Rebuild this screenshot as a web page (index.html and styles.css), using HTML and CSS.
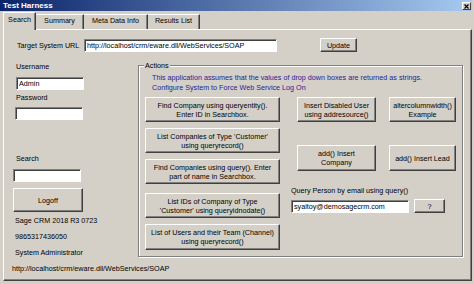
FILE: index.html
```html
<!DOCTYPE html>
<html lang="en">
<head>
  <meta charset="UTF-8">
  <title>Test Harness</title>
  <link rel="stylesheet" href="styles.css">
</head>
<body>

  <div class="window">
    <div class="titlebar">
      <span class="title">Test Harness</span>
      <span class="close">
        <svg width="5" height="5" viewBox="0 0 5 5"><path d="M0.5 0.5 L4.5 4.5 M4.5 0.5 L0.5 4.5" stroke="#000" stroke-width="1.2"/></svg>
      </span>
    </div>

    <div class="tabs">
      <div class="tab active">Search</div>
      <div class="tab tab-summary">Summary</div>
      <div class="tab tab-meta">Meta Data Info</div>
      <div class="tab tab-results">Results List</div>
    </div>

    <div class="page">
      <div class="url-row">
        <span class="url-label">Target System URL</span>
        <input class="field url-field" type="text" value="http://localhost/crm/eware.dll/WebServices/SOAP">
        <button class="btn update">Update</button>
      </div>

      <div class="body">
        <div class="login">
          <span class="lbl lbl-user">Username</span>
          <input class="field f-user" type="text" value="Admin">
          <span class="lbl lbl-pass">Password</span>
          <input class="field f-pass" type="password">
          <span class="lbl lbl-search">Search</span>
          <input class="field f-search" type="text">
          <button class="btn logoff">Logoff</button>
          <span class="info info-first">Sage CRM 2018 R3 0723</span>
          <span class="info">9865317436050</span>
          <span class="info">System Administrator</span>
        </div>

        <div class="group">
          <span class="group-title">Actions</span>
          <p class="note">This application assumes that the values of drop down boxes are returned as strings.</p>
          <p class="note">Configure System to Force Web Service Log On</p>

          <div class="action-cols">
            <div class="col-left">
              <button class="btn wide">Find Company using queryentity().<br>Enter ID in Searchbox.</button>
              <button class="btn wide">List Companies of Type 'Customer'<br>using queryrecord()</button>
              <button class="btn wide">Find Companies using query(). Enter<br>part of name in Searchbox.</button>
              <button class="btn wide spaced">List IDs of Company of Type<br>'Customer' using queryidnodate()</button>
              <button class="btn wide tall">List of Users and their Team (Channel)<br>using queryrecord()</button>
            </div>

            <div class="col-right">
              <div class="btn-row">
                <button class="btn mid">Insert Disabled User<br>using addresource()</button>
                <button class="btn narrow">altercolumnwidth()<br>Example</button>
              </div>
              <div class="btn-row second">
                <button class="btn mid tall">add() Insert<br>Company</button>
                <button class="btn narrow tall">add() Insert Lead</button>
              </div>
              <span class="lbl query-label">Query Person by email using query()</span>
              <div class="query-row">
                <input class="field f-email" type="text" value="syaltoy@demosagecrm.com">
                <button class="btn ask">?</button>
              </div>
            </div>
          </div>
        </div>
      </div>

      <div class="foot">http://localhost/crm/eware.dll/WebServices/SOAP</div>
    </div>
  </div>

</body>
</html>
```

FILE: styles.css
```css
* {
  box-sizing: border-box;
}
body {
  margin: 0;
  background-color: #d4d0c8;
  font-family: "Liberation Sans", Arial, sans-serif;
  font-size: 7.2px;
  color: #000;
}
.window {
  width: 474px;
  height: 284px;
  overflow: hidden;
}

/* title bar */
.titlebar {
  height: 11px;
  margin-right: 2px;
  padding: 0 1px 0 3px;
  display: flex;
  justify-content: space-between;
  background: linear-gradient(to right, #0a246a, #a6caf0);
}
.title {
  color: white;
  font-weight: bold;
  font-size: 8px;
  line-height: 11px;
}
.close {
  align-self: flex-end;
  margin-bottom: 1px;
  width: 9px;
  height: 8px;
  display: flex;
  align-items: center;
  justify-content: center;
  background-color: #d4d0c8;
  border: 1px solid;
  border-color: #fff #404040 #404040 #fff;
}

/* tabs */
.tabs {
  height: 18px;
  padding-left: 3px;
  display: flex;
  align-items: flex-end;
  position: relative;
  z-index: 1;
}
.tab {
  height: 15px;
  line-height: 12px;
  text-align: center;
  border-top: 1px solid #fff;
  border-left: 1px solid #fff;
  border-right: 1px solid #404040;
  box-shadow: inset -1px 0 #808080;
}
.tab.active {
  width: 33px;
  height: 18px;
  line-height: 14px;
  margin-bottom: -1px;
  background-color: #d4d0c8;
}
.tab-summary { width: 48px; border-left: none; }
.tab-meta { width: 64px; border-left: none; }
.tab-results { width: 52px; border-left: none; }

/* tab page */
.page {
  height: 252px;
  margin: 0 2px 0 3px;
  border: 1px solid;
  border-color: #fff #404040 #404040 #fff;
  box-shadow: inset -1px -1px #808080;
}
.url-row {
  height: 22px;
  padding: 8px 0 0 13px;
  display: flex;
  align-items: center;
}
.url-label {
  width: 67px;
}
.url-field {
  width: 193px;
}
.update {
  width: 37px;
  height: 14px;
  margin-left: 43px;
}

/* controls */
.field {
  height: 13px;
  padding: 0 2px;
  font: inherit;
  color: #000;
  background-color: white;
  border: 1px solid;
  border-color: #808080 #fff #fff #808080;
  box-shadow: inset 1px 1px #404040;
  outline: none;
}
.btn {
  padding: 0;
  font: inherit;
  line-height: 9px;
  color: #000;
  white-space: nowrap;
  background-color: #d4d0c8;
  border: 1px solid;
  border-color: #fff #404040 #404040 #fff;
  box-shadow: inset -1px -1px #808080;
}

/* left column */
.body {
  display: flex;
}
.login {
  width: 134px;
  padding-left: 9px;
  display: flex;
  flex-direction: column;
  align-items: flex-start;
}
.lbl, .info {
  line-height: 9px;
}
.lbl-user { margin: 10px 0 0 3px; }
.f-user { width: 68px; margin: 6px 0 0 3px; }
.lbl-pass { margin: 3px 0 0 3px; }
.f-pass { width: 68px; margin: 5px 0 0 2px; }
.lbl-search { margin: 34px 0 0 3px; }
.f-search { width: 68px; margin-top: 6px; }
.logoff {
  width: 70px;
  height: 24px;
  margin-top: 6px;
}
.info {
  margin: 7px 0 0 2px;
}
.info.info-first {
  margin-top: 4px;
}

/* actions group */
.group {
  position: relative;
  width: 325px;
  height: 192px;
  margin-top: 13px;
  padding: 7px 0 0 6px;
  border: 1px solid #808080;
  box-shadow: inset 1px 1px #fff, 1px 1px #fff;
}
.group-title {
  position: absolute;
  top: -5px;
  left: 5px;
  padding: 0 1px;
  line-height: 9px;
  background-color: #d4d0c8;
}
.note {
  margin: 0 0 0 7px;
  line-height: 10px;
  color: #1e1e96;
}
.action-cols {
  margin-top: 4px;
  display: flex;
  align-items: flex-start;
}
.col-left {
  width: 135px;
  display: flex;
  flex-direction: column;
  gap: 6px;
}
.wide {
  width: 135px;
  height: 25px;
}
.btn.tall {
  height: 26px;
}
.btn.spaced {
  margin-top: 3px;
}
.col-right {
  margin-left: 11px;
  display: flex;
  flex-direction: column;
  align-items: flex-start;
}
.btn-row {
  margin-left: 6px;
  display: flex;
  gap: 13px;
}
.btn-row.second {
  margin-top: 23px;
}
.mid {
  width: 79px;
  height: 25px;
}
.narrow {
  width: 67px;
  height: 25px;
}
.query-label {
  margin-top: 15px;
}
.query-row {
  margin-top: 4px;
  display: flex;
  align-items: center;
  gap: 5px;
}
.f-email {
  width: 118px;
}
.ask {
  width: 31px;
  height: 14px;
}

.foot {
  margin-top: 7px;
  padding-left: 8px;
  line-height: 9px;
}
```
